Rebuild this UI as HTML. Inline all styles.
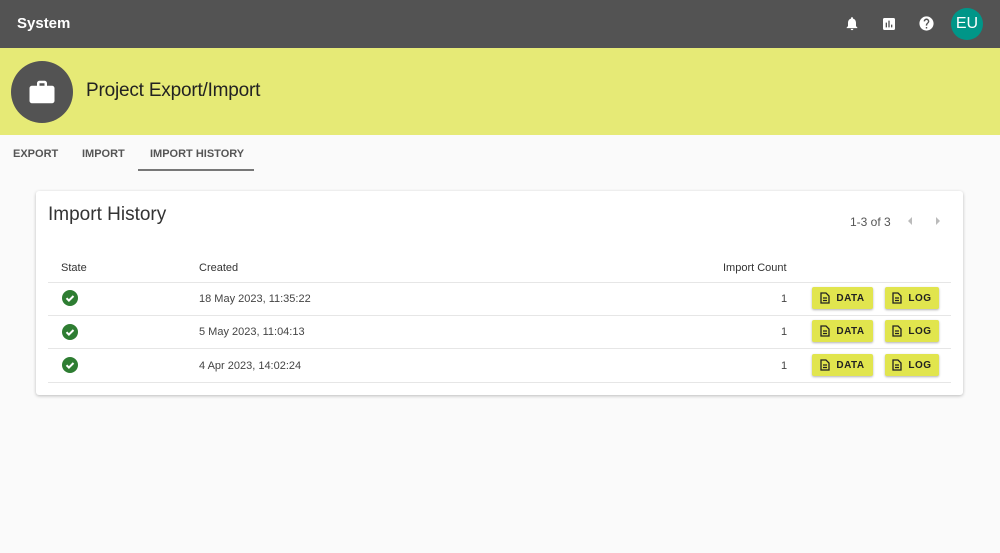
<!DOCTYPE html><html><head><style>
body{margin:0;width:1000px;height:553px;background:#fafafa;font-family:"Liberation Sans",sans-serif;position:relative;overflow:hidden}
.a{position:absolute}
.top{left:0;top:0;width:1000px;height:48px;background:#535353}
.band{left:0;top:48px;width:1000px;height:87px;background:#e6ea76}
.tab{font-size:11px;font-weight:bold;color:#555;top:148px}
.card{left:36px;top:191px;width:927px;height:204px;background:#fff;border-radius:3px;box-shadow:0 1px 3px rgba(0,0,0,.25)}
.line{left:48px;width:903px;height:1px;background:#e6e6e6}
.t{font-size:11px;color:#444}
.btn{height:22px;background:#e1e54e;border-radius:2px;box-shadow:0 1px 2px rgba(0,0,0,.3);font-size:10px;font-weight:bold;color:#222;display:flex;align-items:center;justify-content:center;gap:6px;letter-spacing:.5px}
.d{width:61px}.l{width:54px}
.ck{width:16px;height:16px;border-radius:50%;background:#2e7d32;left:62px}
</style></head><body>
<div class="a top"></div>
<div class="a" style="left:17px;top:15px;color:#fff;font-weight:bold;font-size:15px">System</div>
<svg class="a" style="left:844px;top:15px" width="16" height="17" viewBox="0 0 24 24"><path fill="#fff" d="M12 22c1.1 0 2-.9 2-2h-4c0 1.1.9 2 2 2zm6-6v-5c0-3.1-1.6-5.6-4.5-6.3V4c0-.8-.7-1.5-1.5-1.5s-1.5.7-1.5 1.5v.7C7.6 5.4 6 7.9 6 11v5l-2 2v1h16v-1l-2-2z"/></svg>
<svg class="a" style="left:881px;top:16px" width="16" height="16" viewBox="0 0 24 24"><path fill="#fff" d="M19 3H5c-1.1 0-2 .9-2 2v14c0 1.1.9 2 2 2h14c1.1 0 2-.9 2-2V5c0-1.1-.9-2-2-2zM9 17H7v-7h2v7zm4 0h-2V7h2v10zm4 0h-2v-4h2v4z"/></svg>
<svg class="a" style="left:918px;top:15px" width="17" height="17" viewBox="0 0 24 24"><path fill="#fff" d="M12 2C6.5 2 2 6.5 2 12s4.5 10 10 10 10-4.5 10-10S17.5 2 12 2zm1 17h-2v-2h2v2zm2.1-7.8-.9.9C13.5 12.9 13 13.5 13 15h-2v-.5c0-1.1.5-2.1 1.2-2.8l1.2-1.3c.4-.4.6-.9.6-1.4 0-1.1-.9-2-2-2s-2 .9-2 2H8c0-2.2 1.8-4 4-4s4 1.8 4 4c0 .9-.4 1.7-.9 2.2z"/></svg>
<div class="a" style="left:951px;top:8px;width:32px;height:32px;border-radius:50%;background:#009688;color:#fff;font-size:16px;line-height:32px;text-align:center">EU</div>
<div class="a band"></div>
<div class="a" style="left:11px;top:61px;width:62px;height:62px;border-radius:50%;background:#535353"></div>
<svg class="a" style="left:27px;top:77px" width="30" height="30" viewBox="0 0 24 24"><path fill="#fff" d="M20 7h-4V5c0-1.1-.9-2-2-2h-4c-1.1 0-2 .9-2 2v2H4c-1.1 0-2 .9-2 2v10c0 1.1.9 2 2 2h16c1.1 0 2-.9 2-2V9c0-1.1-.9-2-2-2zm-6 0h-4V5h4v2z"/></svg>
<div class="a" style="left:86px;top:80px;font-size:19px;color:#222;letter-spacing:-.2px">Project Export/Import</div>
<div class="a tab" style="left:13px">EXPORT</div>
<div class="a tab" style="left:82px">IMPORT</div>
<div class="a tab" style="left:150px">IMPORT HISTORY</div>
<div class="a" style="left:138px;top:169px;width:116px;height:2px;background:#777"></div>
<div class="a card"></div>
<div class="a" style="left:48px;top:204px;font-size:19px;color:#333">Import History</div>
<div class="a" style="left:850px;top:215px;font-size:12px;color:#555">1-3 of 3</div>
<div class="a" style="left:908px;top:217px;width:0;height:0;border:4px solid transparent;border-right-color:#bbb;border-left:0"></div>
<div class="a" style="left:936px;top:217px;width:0;height:0;border:4px solid transparent;border-left-color:#bbb;border-right:0"></div>
<div class="a t" style="left:61px;top:262px;color:#333">State</div>
<div class="a t" style="left:199px;top:262px;color:#333">Created</div>
<div class="a t" style="left:723px;top:262px;color:#333">Import Count</div>
<div class="a line" style="top:282px"></div>
<div class="a line" style="top:315px"></div>
<div class="a line" style="top:348px"></div>
<div class="a line" style="top:382px"></div>
<div class="a ck" style="top:290px"></div><div class="a ck" style="top:324px"></div><div class="a ck" style="top:357px"></div>
<svg class="a" style="left:62px;top:290px" width="16" height="16"><path d="M4.5 8.2l2.4 2.4 4.6-4.6" stroke="#fff" stroke-width="2" fill="none"/></svg>
<svg class="a" style="left:62px;top:324px" width="16" height="16"><path d="M4.5 8.2l2.4 2.4 4.6-4.6" stroke="#fff" stroke-width="2" fill="none"/></svg>
<svg class="a" style="left:62px;top:357px" width="16" height="16"><path d="M4.5 8.2l2.4 2.4 4.6-4.6" stroke="#fff" stroke-width="2" fill="none"/></svg>
<div class="a t" style="left:199px;top:293px">18 May 2023, 11:35:22</div>
<div class="a t" style="left:199px;top:326px">5 May 2023, 11:04:13</div>
<div class="a t" style="left:199px;top:360px">4 Apr 2023, 14:02:24</div>
<div class="a t" style="left:781px;top:293px">1</div>
<div class="a t" style="left:781px;top:326px">1</div>
<div class="a t" style="left:781px;top:360px">1</div>
<div class="a btn d" style="left:812px;top:287px"><svg width="10" height="12" viewBox="0 0 10 12"><path d="M1 1h5l3 3v7H1z M3 6h4M3 8.5h4" stroke="#222" stroke-width="1.3" fill="none"/></svg>DATA</div>
<div class="a btn l" style="left:885px;top:287px"><svg width="10" height="12" viewBox="0 0 10 12"><path d="M1 1h5l3 3v7H1z M3 6h4M3 8.5h4" stroke="#222" stroke-width="1.3" fill="none"/></svg>LOG</div>
<div class="a btn d" style="left:812px;top:320px"><svg width="10" height="12" viewBox="0 0 10 12"><path d="M1 1h5l3 3v7H1z M3 6h4M3 8.5h4" stroke="#222" stroke-width="1.3" fill="none"/></svg>DATA</div>
<div class="a btn l" style="left:885px;top:320px"><svg width="10" height="12" viewBox="0 0 10 12"><path d="M1 1h5l3 3v7H1z M3 6h4M3 8.5h4" stroke="#222" stroke-width="1.3" fill="none"/></svg>LOG</div>
<div class="a btn d" style="left:812px;top:354px"><svg width="10" height="12" viewBox="0 0 10 12"><path d="M1 1h5l3 3v7H1z M3 6h4M3 8.5h4" stroke="#222" stroke-width="1.3" fill="none"/></svg>DATA</div>
<div class="a btn l" style="left:885px;top:354px"><svg width="10" height="12" viewBox="0 0 10 12"><path d="M1 1h5l3 3v7H1z M3 6h4M3 8.5h4" stroke="#222" stroke-width="1.3" fill="none"/></svg>LOG</div>
</body></html>
